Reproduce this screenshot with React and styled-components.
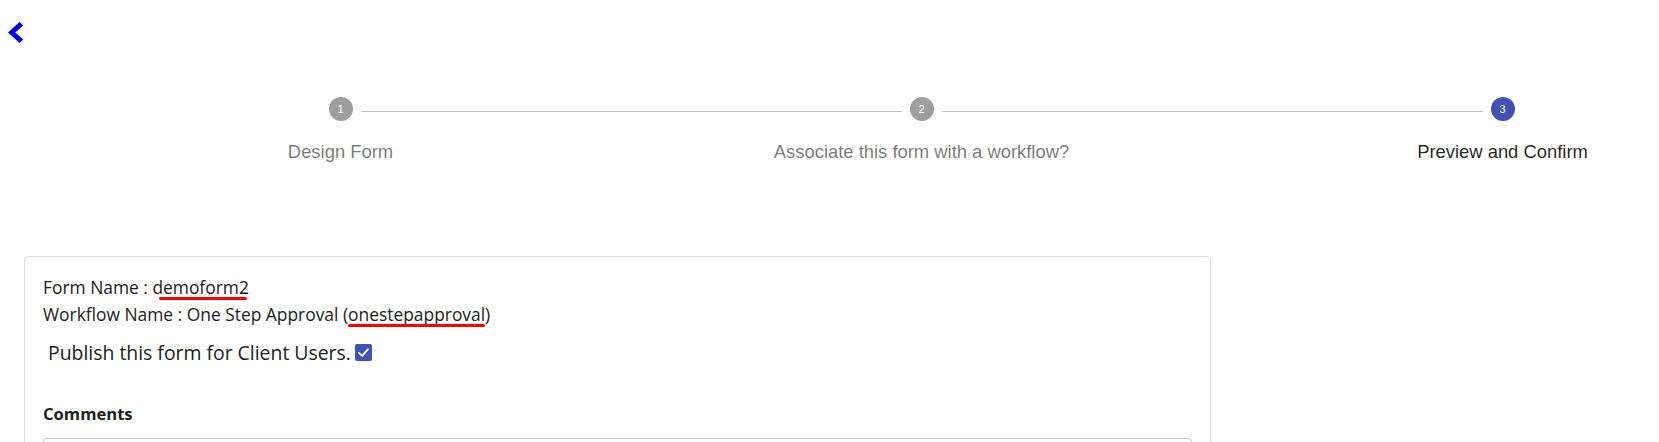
import React from 'react';
import styled, { createGlobalStyle } from 'styled-components';

const GlobalStyle = createGlobalStyle`
    html, body {
        margin: 0;
        padding: 0;
        background: #fff;
        overflow: hidden;
    }
    body {
        font-family: 'Open Sans', 'Liberation Sans', sans-serif;
        color: #212121;
    }
`;

const Page = styled.div`
    width: 1659px;
    height: 442px;
    overflow: hidden;
`;

const BackButton = styled.button`
    display: block;
    border: none;
    background: none;
    padding: 0;
    margin: 22px 0 0 8px;
    width: 16px;
    height: 21px;
    cursor: pointer;
    color: #0000ff;
`;

const Stepper = styled.div`
    display: flex;
    width: 1743px;
    margin: 54px 0 0 50px;
`;

const Step = styled.div`
    flex: 1;
    display: flex;
    flex-direction: column;
    align-items: center;
`;

const IconRow = styled.div`
    display: flex;
    width: 100%;
    align-items: flex-start;
`;

const Connector = styled.div`
    flex: 1;
    height: 1px;
    margin-top: 14px;
    background: ${p => (p.$hidden ? 'transparent' : '#bdbdbd')};
`;

const Circle = styled.div`
    width: 24px;
    height: 24px;
    margin: 0 8px;
    border-radius: 50%;
    background: ${p => (p.$active ? '#3f51b5' : '#9e9e9e')};
    color: #fff;
    font-family: 'Liberation Sans', Arial, sans-serif;
    font-size: 11px;
    display: flex;
    align-items: center;
    justify-content: center;
`;

const StepLabel = styled.div`
    margin-top: 17px;
    font-family: 'Liberation Sans', Arial, sans-serif;
    font-size: 18.4px;
    line-height: 27px;
    color: ${p => (p.$active ? 'rgba(0, 0, 0, 0.87)' : 'rgba(0, 0, 0, 0.54)')};
`;

const Card = styled.div`
    width: 1187px;
    box-sizing: border-box;
    margin: 91px 0 0 24px;
    border: 1px solid #dcdcdc;
    border-radius: 5px;
    padding: 17px 18px 40px 18px;
`;

const InfoLine = styled.div`
    font-size: 17.4px;
    line-height: 26.5px;
    color: #212121;
`;

const Marked = styled.span`
    position: relative;
    &::after {
        content: '';
        position: absolute;
        left: ${p => p.$left || 0}px;
        right: ${p => p.$right || 0}px;
        top: 100%;
        margin-top: -2px;
        height: 3px;
        border-radius: 2px;
        background: #f00;
    }
`;

const PublishRow = styled.label`
    display: flex;
    align-items: center;
    gap: 4px;
    margin: 12px 0 0 5px;
    font-size: 19.4px;
    line-height: 28px;
    color: #212121;
`;

const CheckBox = styled.span`
    width: 17px;
    height: 17px;
    border-radius: 2px;
    background: #3f51b5;
    display: inline-flex;
    align-items: center;
    justify-content: center;
    margin-top: -2px;
`;

const SectionTitle = styled.div`
    margin-top: 35px;
    font-size: 16.6px;
    line-height: 24px;
    font-weight: 700;
    color: #212121;
`;

const CommentBox = styled.textarea`
    display: block;
    width: 100%;
    box-sizing: border-box;
    height: 100px;
    margin-top: 12px;
    border: 1px solid #c8c8c8;
    border-radius: 4px;
    resize: vertical;
    font: inherit;
`;

const steps = [
    'Design Form',
    'Associate this form with a workflow?',
    'Preview and Confirm',
];

const activeStep = 2;

const Chevron = () => (
    <svg width="16" height="21" viewBox="0 0 16 21">
        <path
            d="M0 10.5 L11.6 0 L15.3 3.4 L7.2 10.5 L15.3 17.6 L11.6 21 Z"
            fill="currentColor"
        />
    </svg>
);

const Check = () => (
    <svg width="13" height="13" viewBox="0 0 13 13">
        <path
            d="M2 6.8 L5.2 9.8 L11 3.2"
            fill="none"
            stroke="#fff"
            strokeWidth="1.8"
            strokeLinecap="round"
            strokeLinejoin="round"
        />
    </svg>
);

const App = () => (
    <>
        <GlobalStyle />
        <Page>
            <BackButton aria-label="Back">
                <Chevron />
            </BackButton>

            {/* STEPPER */}
            <Stepper>
                {steps.map((label, i) => (
                    <Step key={label}>
                        <IconRow>
                            <Connector $hidden={i === 0} />
                            <Circle $active={i === activeStep}>{i + 1}</Circle>
                            <Connector $hidden={i === steps.length - 1} />
                        </IconRow>
                        <StepLabel $active={i === activeStep}>{label}</StepLabel>
                    </Step>
                ))}
            </Stepper>

            {/* PREVIEW */}
            <Card>
                <InfoLine>
                    Form Name : <Marked $left={7} $right={2}>demoform2</Marked>
                </InfoLine>
                <InfoLine>
                    Workflow Name : One Step Approval (
                    <Marked>onestepapproval</Marked>)
                </InfoLine>
                <PublishRow>
                    Publish this form for Client Users.
                    <CheckBox>
                        <Check />
                    </CheckBox>
                </PublishRow>
                <SectionTitle>Comments</SectionTitle>
                <CommentBox />
            </Card>
        </Page>
    </>
);

export default App;
